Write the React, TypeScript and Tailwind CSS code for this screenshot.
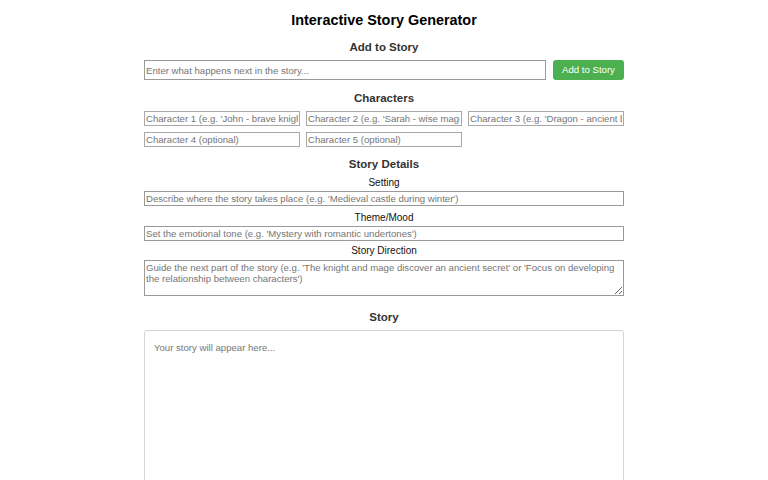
import { useState } from "react";

// ---------------------------------------------------------------------------
// Shared styles
// ---------------------------------------------------------------------------

const inputBase =
  "block w-full border border-[#9a9a9a] bg-white px-[1px] text-[9.6px] text-[#222] outline-none placeholder:text-[#757575]";

const sectionTitle = "h-[14px] text-center text-[11.5px] font-bold leading-[14px] text-[#333]";

const fieldLabel = "h-[12px] text-center text-[10px] leading-[12px] text-[#111]";

// ---------------------------------------------------------------------------
// Main page
// ---------------------------------------------------------------------------

export default function App() {
  const [nextPart, setNextPart] = useState("");
  const [characters, setCharacters] = useState(["", "", "", "", ""]);
  const [setting, setSetting] = useState("");
  const [theme, setTheme] = useState("");
  const [direction, setDirection] = useState("");
  const [story, setStory] = useState<string[]>([]);

  const characterPlaceholders = [
    "Character 1 (e.g. 'John - brave knight')",
    "Character 2 (e.g. 'Sarah - wise mage')",
    "Character 3 (e.g. 'Dragon - ancient beast')",
    "Character 4 (optional)",
    "Character 5 (optional)",
  ];

  const addToStory = () => {
    if (!nextPart.trim()) return;
    setStory((s) => [...s, nextPart.trim()]);
    setNextPart("");
  };

  return (
    <div className="min-h-screen bg-white font-['Liberation_Sans',Arial,sans-serif]">
      <div className="mx-auto w-[480px] pt-[12px]">
        {/* Title */}
        <h1 className="h-[16px] text-center text-[14.4px] font-bold leading-[16px] text-black">
          Interactive Story Generator
        </h1>

        {/* Add to story */}
        <h2 className={`mt-[12px] ${sectionTitle}`}>Add to Story</h2>
        <div className="mt-[6px] flex items-center gap-[7px]">
          <input
            className={`${inputBase} h-[20px] flex-1`}
            placeholder="Enter what happens next in the story..."
            value={nextPart}
            onChange={(e) => setNextPart(e.target.value)}
          />
          <button
            className="h-[20px] w-[71px] shrink-0 rounded-[3px] bg-[#4caf50] text-[9.6px] text-white"
            onClick={addToStory}
          >
            Add to Story
          </button>
        </div>

        {/* Characters */}
        <h2 className={`mt-[11px] ${sectionTitle}`}>Characters</h2>
        <div className="mt-[6px] grid grid-cols-3 gap-x-[6px] gap-y-[6px]">
          {characterPlaceholders.map((ph, i) => (
            <input
              key={i}
              className={`${inputBase} h-[15px] border-[#a8a8a8]`}
              placeholder={ph}
              value={characters[i]}
              onChange={(e) =>
                setCharacters((c) => c.map((v, j) => (j === i ? e.target.value : v)))
              }
            />
          ))}
        </div>

        {/* Story details */}
        <h2 className={`mt-[10px] ${sectionTitle}`}>Story Details</h2>
        <div className={`mt-[6px] ${fieldLabel}`}>Setting</div>
        <input
          className={`${inputBase} mt-[2px] h-[15px]`}
          placeholder="Describe where the story takes place (e.g. 'Medieval castle during winter')"
          value={setting}
          onChange={(e) => setSetting(e.target.value)}
        />
        <div className={`mt-[6px] ${fieldLabel}`}>Theme/Mood</div>
        <input
          className={`${inputBase} mt-[2px] h-[15px]`}
          placeholder="Set the emotional tone (e.g. 'Mystery with romantic undertones')"
          value={theme}
          onChange={(e) => setTheme(e.target.value)}
        />
        <div className={`mt-[4px] ${fieldLabel}`}>Story Direction</div>
        <textarea
          className={`${inputBase} mt-[3px] h-[36px] py-[1px] leading-[11px]`}
          placeholder="Guide the next part of the story (e.g. 'The knight and mage discover an ancient secret' or 'Focus on developing the relationship between characters')"
          value={direction}
          onChange={(e) => setDirection(e.target.value)}
        />

        {/* Story output */}
        <h2 className={`mt-[14px] ${sectionTitle}`}>Story</h2>
        <div className="mt-[6px] min-h-[216px] rounded-[3px] border border-[#d4d4d4] px-[9px] py-[11px] text-[9.6px] leading-[12px]">
          {story.length ? (
            story.map((p, i) => (
              <p key={i} className="mb-[6px] text-[#222]">
                {p}
              </p>
            ))
          ) : (
            <p className="text-[#777]">Your story will appear here...</p>
          )}
        </div>
      </div>
    </div>
  );
}
